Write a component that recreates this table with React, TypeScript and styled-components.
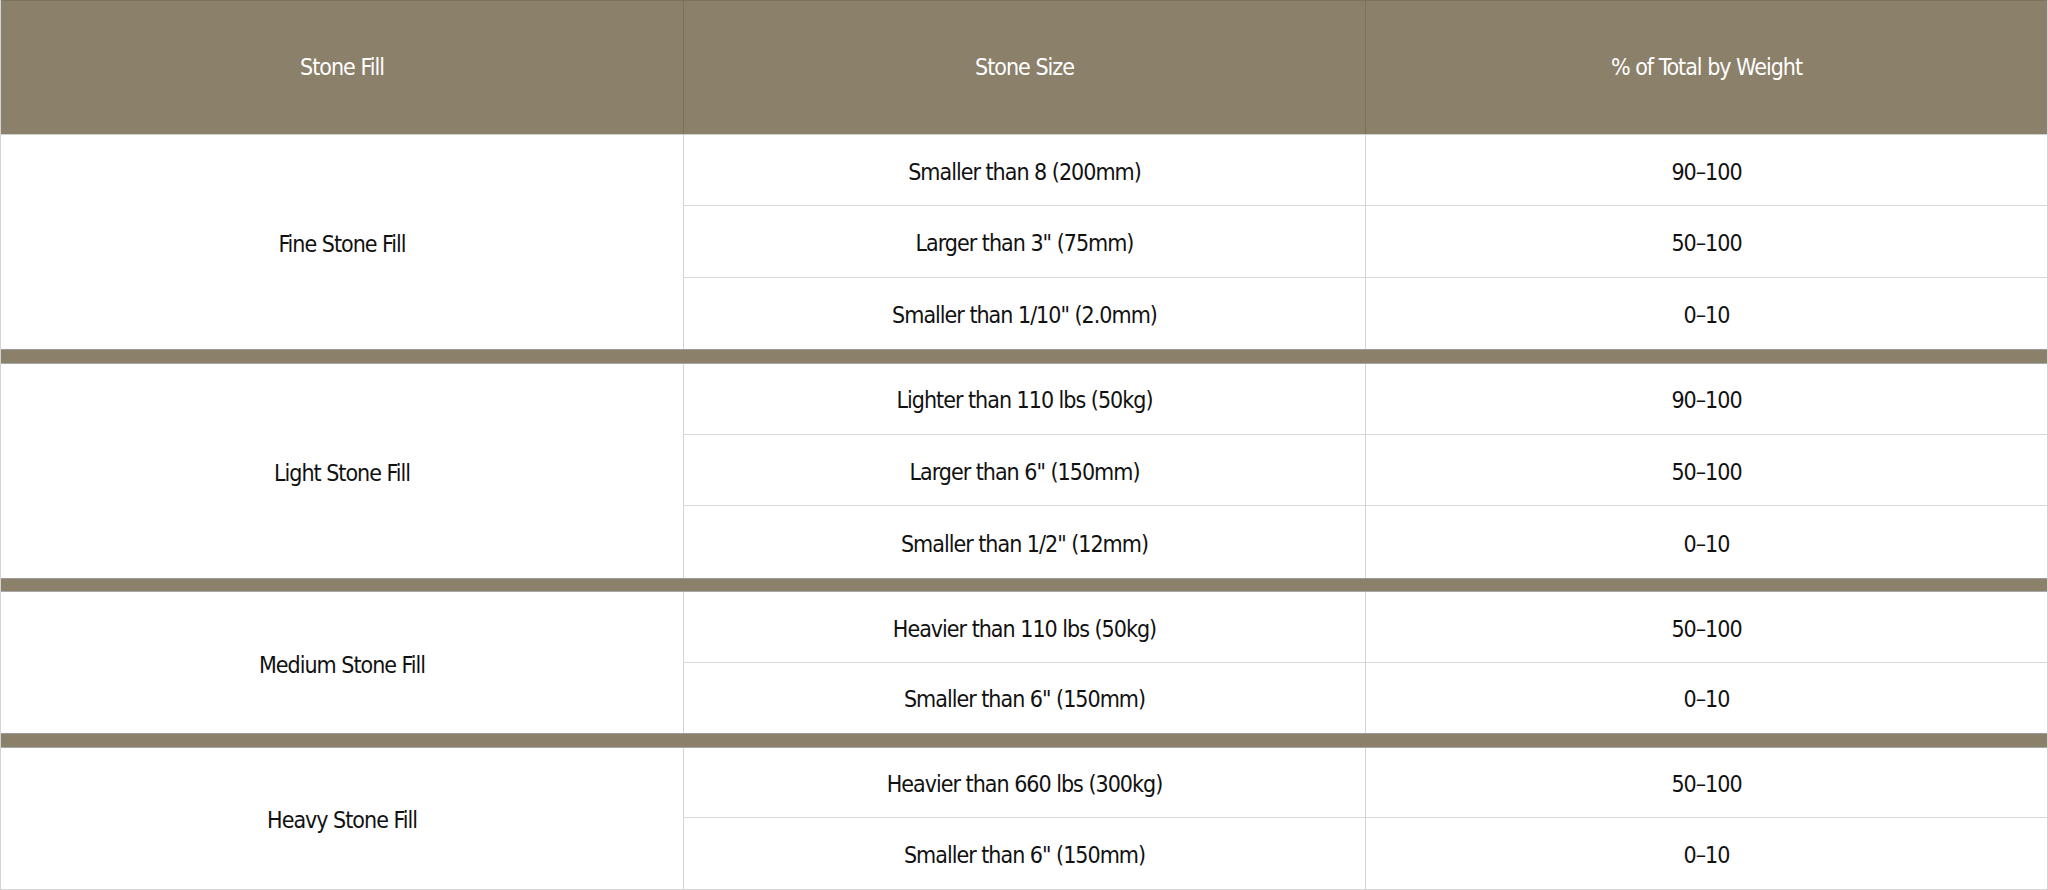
import styled, { createGlobalStyle } from "styled-components";

const GlobalStyle = createGlobalStyle`
  html, body {
    margin: 0;
    padding: 0;
    background: #ffffff;
  }
  body {
    font-family: "Liberation Sans Narrow", "DejaVu Sans Condensed", "Liberation Sans", sans-serif;
  }
`;

const tan = "#8b806a";

type Group = {
  name: string;
  rowHeight: number;
  rows: { size: string; weight: string }[];
};

const groups: Group[] = [
  {
    name: "Fine Stone Fill",
    rowHeight: 71.4,
    rows: [
      { size: "Smaller than 8 (200mm)", weight: "90–100" },
      { size: "Larger than 3\" (75mm)", weight: "50–100" },
      { size: "Smaller than 1/10\" (2.0mm)", weight: "0–10" }
    ]
  },
  {
    name: "Light Stone Fill",
    rowHeight: 71.4,
    rows: [
      { size: "Lighter than 110 lbs (50kg)", weight: "90–100" },
      { size: "Larger than 6\" (150mm)", weight: "50–100" },
      { size: "Smaller than 1/2\" (12mm)", weight: "0–10" }
    ]
  },
  {
    name: "Medium Stone Fill",
    rowHeight: 70.4,
    rows: [
      { size: "Heavier than 110 lbs (50kg)", weight: "50–100" },
      { size: "Smaller than 6\" (150mm)", weight: "0–10" }
    ]
  },
  {
    name: "Heavy Stone Fill",
    rowHeight: 70.8,
    rows: [
      { size: "Heavier than 660 lbs (300kg)", weight: "50–100" },
      { size: "Smaller than 6\" (150mm)", weight: "0–10" }
    ]
  }
];

const Table = styled.div`
  width: 2048px;
  box-sizing: border-box;
  border-left: 1px solid #d4d4d4;
  border-right: 1px solid #d4d4d4;
  border-bottom: 1px solid #d4d4d4;
`;

const HeaderRow = styled.div`
  display: grid;
  grid-template-columns: repeat(3, 1fr);
  height: 135px;
  box-sizing: border-box;
  background: ${tan};
  border-top: 1px solid #7a715f;
  border-bottom: 1px solid #cfcfcf;
`;

const HeaderCell = styled.div`
  display: flex;
  align-items: center;
  justify-content: center;
  color: #ffffff;
  font-size: 23px;
  letter-spacing: -1px;
  padding-bottom: 2px;
  border-left: 1px solid #7a715f;

  &:first-child {
    border-left: none;
  }
`;

const GroupBlock = styled.div<{ count: number; rowHeight: number }>`
  display: grid;
  grid-template-columns: repeat(3, 1fr);
  grid-template-rows: repeat(${props => props.count}, ${props => props.rowHeight}px);
`;

const NameCell = styled.div<{ count: number }>`
  grid-column: 1;
  grid-row: 1 / span ${props => props.count};
  display: flex;
  align-items: center;
  justify-content: center;
  font-size: 23px;
  letter-spacing: -1px;
  color: #111111;
  padding-top: 4px;
`;

const Cell = styled.div<{ last: boolean }>`
  display: flex;
  align-items: center;
  justify-content: center;
  font-size: 23px;
  letter-spacing: -1px;
  color: #111111;
  padding-top: 3px;
  box-sizing: border-box;
  border-left: 1px solid #d4d4d4;
  border-bottom: ${props => (props.last ? "none" : "1px solid #d9d9d9")};
`;

const Band = styled.div`
  height: 14.5px;
  box-sizing: border-box;
  background: ${tan};
  border-top: 1px solid #9a9a9a;
  border-bottom: 1px solid #a8a8a8;
`;

export default function App() {
  return (
    <>
      <GlobalStyle />
      <Table>
        <HeaderRow>
          <HeaderCell>Stone Fill</HeaderCell>
          <HeaderCell>Stone Size</HeaderCell>
          <HeaderCell>% of Total by Weight</HeaderCell>
        </HeaderRow>
        {groups.map((group, index) => (
          <div key={group.name}>
            {index > 0 && <Band />}
            <GroupBlock count={group.rows.length} rowHeight={group.rowHeight}>
              <NameCell count={group.rows.length}>{group.name}</NameCell>
              {group.rows.map((row, i) => {
                const last = i === group.rows.length - 1;
                return [
                  <Cell key={"s" + i} last={last}>{row.size}</Cell>,
                  <Cell key={"w" + i} last={last}>{row.weight}</Cell>
                ];
              })}
            </GroupBlock>
          </div>
        ))}
      </Table>
    </>
  );
}
